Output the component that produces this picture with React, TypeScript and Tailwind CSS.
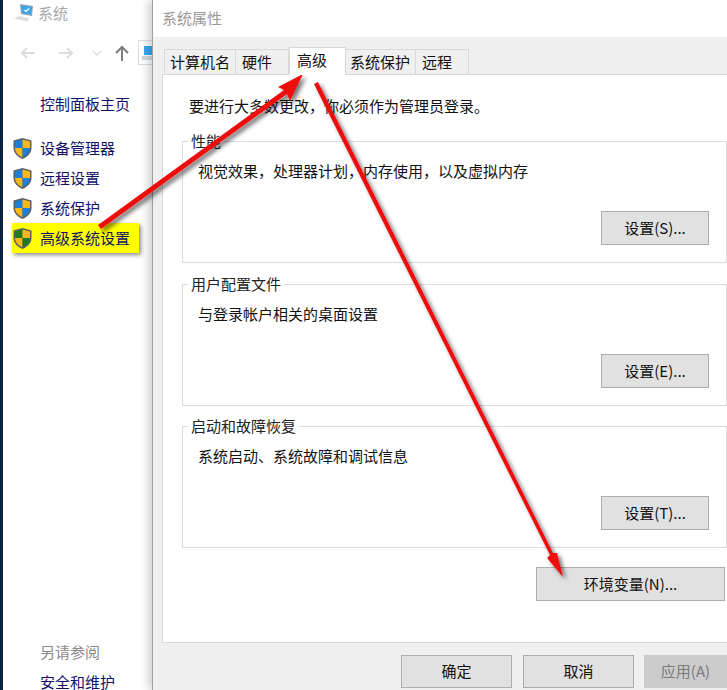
import React from 'react';

const cjk = { fontFamily: '"Noto Sans CJK SC", "Noto Sans", sans-serif' };

const Shield = ({ dark }: { dark?: boolean }) => (
  <svg width="21" height="23" viewBox="0 0 21 23" className="shrink-0">
    <path d="M10.5 1 L19.5 3.5 V11 C19.5 16.5 15 20 10.5 22 C6 20 1.5 16.5 1.5 11 V3.5 Z" fill="#5a5f66" />
    <path d="M10.5 2.5 V11 H3 V4.5 Z" fill={dark ? '#1f7a1f' : '#1f7fd8'} />
    <path d="M10.5 2.5 L18 4.5 V11 H10.5 Z" fill="#f8b81c" />
    <path d="M3 11 H10.5 V20.3 C7 18.7 3 15.8 3 11 Z" fill="#f8b81c" />
    <path d="M18 11 H10.5 V20.3 C14 18.7 18 15.8 18 11 Z" fill={dark ? '#1f7a1f' : '#1f7fd8'} />
  </svg>
);

const Laptop = () => (
  <svg width="22" height="20" viewBox="0 0 22 20" className="shrink-0">
    <path d="M7 1 L20 3 L19 13 L8 11 Z" fill="#8fa3b0" />
    <path d="M8 2.5 L19 4 L18 11.5 L9 10 Z" fill="#38a7ee" />
    <path d="M11.5 7 L13 8.5 L16 5.5" stroke="#ffffff" strokeWidth="1.2" fill="none" />
    <path d="M1 15.5 L6 13 L17 15.5 L14 18.5 Z" fill="#dcdfe1" />
  </svg>
);

const NavLink = ({ label, dark }: { label: string; dark?: boolean }) => (
  <div className="flex h-[30px] items-center gap-[7px] pl-[9px] text-[15px] text-[#10106a]">
    <Shield dark={dark} />
    <span>{label}</span>
  </div>
);

const GroupBox = ({ title, desc, button }: { title: string; desc: string; button: string }) => (
  <div className="relative h-[122px] border border-[#dcdcdc] pl-[15px] pr-[17px] pt-[20px]">
    <span className="absolute left-[5px] top-[-10px] bg-white px-[3px] text-[15px] leading-[18px] text-[#222222]">
      {title}
    </span>
    <p className="text-[15px] leading-[18px] text-[#111111]">{desc}</p>
    <div className="mt-[31px] flex justify-end">
      <button className="h-[34px] w-[108px] border border-[#adadad] bg-[#e1e1e1] text-[15px] text-[#111111]">
        {button}
      </button>
    </div>
  </div>
);

const Tab = ({ label, className }: { label: string; className: string }) => (
  <div
    className={`flex h-[25px] items-center border border-b-0 border-[#d9d9d9] bg-[#f0f0f0] text-[15px] text-[#111111] ${className}`}
  >
    {label}
  </div>
);

const FooterButton = ({ label, disabled, className }: { label: string; disabled?: boolean; className: string }) => (
  <button
    className={`h-[33px] text-[15px] ${
      disabled ? 'bg-[#cccccc] text-[#7a7a7a]' : 'border border-[#adadad] bg-[#e1e1e1] text-[#111111]'
    } ${className}`}
  >
    {label}
  </button>
);

// the red annotation arrows drawn over the screenshot
const Arrows = () => (
  <svg width="727" height="690" viewBox="0 0 727 690" className="pointer-events-none absolute left-0 top-0">
    <defs>
      <filter id="arrowShadow" x="-10%" y="-10%" width="120%" height="120%">
        <feDropShadow dx="3" dy="3" stdDeviation="2" floodColor="#000000" floodOpacity="0.55" />
      </filter>
    </defs>
    <g filter="url(#arrowShadow)" fill="#ee1111">
      <path d="M98 225 L284 90 L278 87 L303 74 L290 101 L287 94 L101 229 Z" />
      <path d="M314 84 L318 82 L553 553 L557 553 L563 577 L547 558 L550 555 Z" />
    </g>
  </svg>
);

export default function App() {
  return (
    <div className="relative flex h-[690px] w-[727px] overflow-hidden bg-white" style={cjk}>
      {/* control panel behind the dialog */}
      <div className="h-full w-[152px] shrink-0 border-l-[3px] border-[#0a2440] bg-white">
        <div className="flex h-[26px] items-center gap-[3px] pl-[10px] text-[15px] text-[#a8a8a8]">
          <Laptop />
          <span>系统</span>
        </div>
        <div className="flex h-[53px] items-center pl-[17px] text-[#dcdcdc]">
          <svg width="16" height="14" viewBox="0 0 16 14" fill="none" stroke="currentColor" strokeWidth="2">
            <path d="M15 7 H2 M7 2 L2 7 L7 12" />
          </svg>
          <svg width="16" height="14" viewBox="0 0 16 14" fill="none" stroke="currentColor" strokeWidth="2" className="ml-[22px]">
            <path d="M1 7 H14 M9 2 L14 7 L9 12" />
          </svg>
          <svg width="10" height="6" viewBox="0 0 10 6" fill="none" stroke="currentColor" strokeWidth="1.5" className="ml-[18px]">
            <path d="M1 1 L5 5 L9 1" />
          </svg>
          <svg width="14" height="16" viewBox="0 0 14 16" fill="none" stroke="#7d7d7d" strokeWidth="2" className="ml-[13px]">
            <path d="M7 16 V2 M1 8 L7 2 L13 8" />
          </svg>
          <div className="ml-[9px] flex h-[25px] flex-1 items-center border border-r-0 border-[#dcdcdc] pl-[2px]">
            <svg width="11" height="18" viewBox="0 0 11 18">
              <rect x="3" y="2" width="8" height="9" fill="#38a7ee" />
              <rect x="1" y="12" width="10" height="4" fill="#d4d8da" />
            </svg>
          </div>
        </div>
        <div className="flex h-[50px] items-center pl-[37px] text-[15px] text-[#10106a]">控制面板主页</div>
        <div className="flex flex-col pt-[4px]">
          <NavLink label="设备管理器" />
          <NavLink label="远程设置" />
          <NavLink label="系统保护" />
          <div className="ml-[9px] flex h-[30px] w-[127px] items-center gap-[7px] bg-[#ffff00] text-[15px] text-[#10106a] shadow-[2px_2px_4px_rgba(0,0,0,0.45)]">
            <Shield dark />
            <span>高级系统设置</span>
          </div>
        </div>
        <div className="mt-[384px] pl-[37px] text-[15px] leading-[30px] text-[#8a8a8a]">另请参阅</div>
        <div className="pl-[37px] text-[15px] leading-[30px] text-[#10106a]">安全和维护</div>
      </div>

      {/* system properties dialog */}
      <div className="flex h-full flex-1 flex-col border-l border-[#a0a0a0] bg-[#f0f0f0] shadow-[-4px_0_8px_rgba(0,0,0,0.18)]">
        <div className="flex h-[37px] items-center bg-white pl-[9px] text-[15px] text-[#9a9a9a]">系统属性</div>
        <div className="flex h-[37px] items-end pl-[11px]">
          <Tab label="计算机名" className="w-[72px] pl-[5px]" />
          <Tab label="硬件" className="w-[53px] border-l-0 pl-[6px]" />
          <div className="z-10 mb-[-1px] flex h-[28px] w-[57px] items-center border border-b-0 border-[#d9d9d9] bg-white pb-[3px] pl-[7px] text-[15px] text-[#111111]">
            高级
          </div>
          <Tab label="系统保护" className="w-[70px] border-l-0 pl-[4px]" />
          <Tab label="远程" className="w-[53px] border-l-0 pl-[6px]" />
        </div>
        <div className="ml-[9px] h-[569px] border-b border-l border-t border-[#d9d9d9] bg-white pl-[19px]">
          <p className="pl-[7px] pt-[22px] text-[15px] leading-[18px] text-[#111111]">要进行大多数更改，你必须作为管理员登录。</p>
          <div className="mt-[26px] flex flex-col">
            <GroupBox title="性能" desc="视觉效果，处理器计划，内存使用，以及虚拟内存" button="设置(S)..." />
            <div className="mt-[21px]">
              <GroupBox title="用户配置文件" desc="与登录帐户相关的桌面设置" button="设置(E)..." />
            </div>
            <div className="mt-[20px]">
              <GroupBox title="启动和故障恢复" desc="系统启动、系统故障和调试信息" button="设置(T)..." />
            </div>
          </div>
          <div className="mt-[19px] flex justify-end pr-[2px]">
            <button className="h-[34px] w-[189px] border border-[#adadad] bg-[#e1e1e1] text-[15px] text-[#111111]">
              环境变量(N)...
            </button>
          </div>
        </div>
        <div className="flex justify-end pt-[12px]">
          <FooterButton label="确定" className="w-[111px]" />
          <FooterButton label="取消" className="ml-[11px] w-[111px]" />
          <FooterButton label="应用(A)" disabled className="ml-[10px] w-[83px]" />
        </div>
      </div>

      <Arrows />
    </div>
  );
}
